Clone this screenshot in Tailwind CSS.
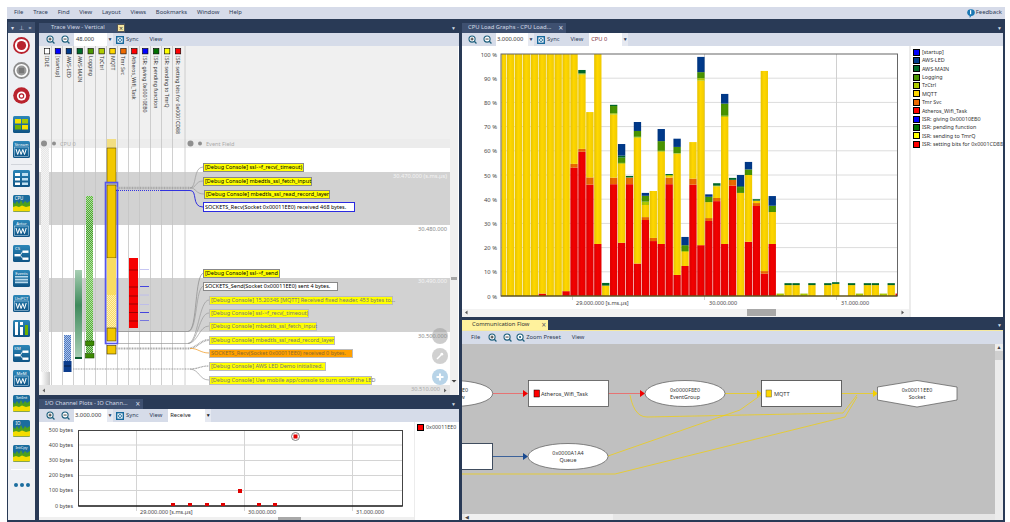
<!DOCTYPE html>
<html lang="en">
<head>
  <meta charset="UTF-8" />
  <title>Tracealyzer</title>
  <script src="https://cdn.jsdelivr.net/npm/@tailwindcss/browser@4"></script>
</head>
<body class="w-[1010px] h-[522px] overflow-hidden bg-white font-['Noto_Sans',sans-serif] text-[5.8px] text-[#2b3a55]">

  <!-- shared icons and fills -->
  <svg class="absolute w-0 h-0">
    <defs>
      <linearGradient id="iconBlue" x1="0" y1="0" x2="0" y2="1"><stop offset="0" stop-color="#2c86b8"/><stop offset="1" stop-color="#0f5384"/></linearGradient>
      <linearGradient id="barShade" x1="0" y1="0" x2="1" y2="0"><stop offset="0" stop-color="#000" stop-opacity=".1"/><stop offset=".45" stop-color="#000" stop-opacity="0"/><stop offset="1" stop-color="#000" stop-opacity=".06"/></linearGradient>
      <linearGradient id="greenFade" x1="0" y1="0" x2="0" y2="1"><stop offset="0" stop-color="#5cb83c"/><stop offset=".2" stop-color="#3f9f22"/><stop offset=".5" stop-color="#6cc04e"/><stop offset=".75" stop-color="#5cb83c"/><stop offset="1" stop-color="#3f9f22"/></linearGradient>
      <linearGradient id="dkFade" x1="0" y1="0" x2="0" y2="1"><stop offset="0" stop-color="#a8cfb4"/><stop offset=".4" stop-color="#3f8a5c"/><stop offset="1" stop-color="#a8cfb4"/></linearGradient>
      <linearGradient id="idleBar" x1="0" y1="0" x2="1" y2="0"><stop offset="0" stop-color="#fff"/><stop offset="1" stop-color="#c8c8c8"/></linearGradient>
      <pattern id="dither" width="2" height="2" patternUnits="userSpaceOnUse"><rect width="1" height="1" fill="#fff" fill-opacity=".55"/><rect x="1" y="1" width="1" height="1" fill="#fff" fill-opacity=".55"/></pattern>
      <symbol id="zoomIn" viewBox="0 0 10 10"><circle cx="4.5" cy="4.5" r="3.4" fill="#fff" stroke="#1d5f7c" stroke-width="1.2"/><path d="M7 7l2.4 2.4" stroke="#1d5f7c" stroke-width="1.4"/><path d="M2.8 4.5h3.4M4.5 2.8v3.4" stroke="#111" stroke-width=".9"/></symbol>
      <symbol id="zoomOut" viewBox="0 0 10 10"><circle cx="4.5" cy="4.5" r="3.4" fill="#fff" stroke="#1d5f7c" stroke-width="1.2"/><path d="M7 7l2.4 2.4" stroke="#1d5f7c" stroke-width="1.4"/><path d="M2.8 4.5h3.4" stroke="#111" stroke-width=".9"/></symbol>
      <symbol id="zoomFit" viewBox="0 0 10 10"><circle cx="4.5" cy="4.5" r="3.4" fill="#fff" stroke="#1d5f7c" stroke-width="1.2"/><path d="M7 7l2.4 2.4" stroke="#1d5f7c" stroke-width="1.4"/><circle cx="4.5" cy="4.5" r="1.2" fill="#1d5f7c"/></symbol>
      <symbol id="sync" viewBox="0 0 9 9"><rect width="9" height="9" fill="#17689c"/><rect x="1.6" y="1.6" width="5.8" height="5.8" fill="#fff"/><circle cx="4.5" cy="4.5" r="1.7" fill="none" stroke="#17689c"/></symbol>
      <symbol id="wave" viewBox="0 0 17 17"><rect width="17" height="17" rx="1.5" fill="url(#iconBlue)"/><rect x="1.5" y="6" width="14" height="9.5" fill="none" stroke="#cfe4f2" stroke-width=".5"/><path d="M3 8l1.7 5.5 1.7-5 1.7 5 1.7-5 1.700 5 1.700-5.500" fill="none" stroke="#fff" stroke-width="1"/></symbol>
      <symbol id="load" viewBox="0 0 17 17"><rect width="17" height="17" rx="1.5" fill="#1b6d9e"/><path d="M0 7l2 2 2-3 2 3 2-4 2 4 2-3 2 2 3-2v10H0z" fill="#4f9f1c"/><path d="M0 12l3-1 3 1 3-1.500 4 1.500 4-1v4.500a1 1 0 0 1-1 1H1a1 1 0 0 1-1-1z" fill="#f4dc00"/></symbol>
      <symbol id="tree" viewBox="0 0 17 17"><rect width="17" height="17" rx="1.5" fill="url(#iconBlue)"/><rect x="9.5" y="5.5" width="6" height="2.4" fill="#fff"/><rect x="1.5" y="9" width="6" height="2.4" fill="#fff"/><rect x="9.5" y="12.5" width="6" height="2.4" fill="#fff"/><path d="M7.5 10l2-3.300M7.500 10.400l2 3" stroke="#fff" stroke-width=".8"/></symbol>
    </defs>
  </svg>

  <div class="pt-[7px] pl-[7px] pr-[5px]">
    <!-- menu bar -->
    <div class="h-[12px] bg-[#d6dbe9] flex items-center pl-[7px] gap-[9.75px] leading-none text-[5.9px]">
      <span>File</span><span>Trace</span><span>Find</span><span>View</span><span>Layout</span><span>Views</span><span>Bookmarks</span><span>Window</span><span>Help</span>
      <span class="ml-auto mr-[3px] flex items-center gap-[1px]">
        <svg class="w-[8px] h-[9px]" viewBox="0 0 8 9"><ellipse cx="4" cy="3.6" rx="3.8" ry="3.4" fill="#1b78b4"/><path d="M2.5 6l.3 3 2.2-3z" fill="#1b78b4"/><rect x="3" y="1.2" width="1.2" height="4" fill="#fff"/></svg>
        Feedback
      </span>
    </div>

    <!-- main area -->
    <div class="h-[503px] bg-[#293a56] flex pl-[1px] pr-[2px] pt-[3px] pb-[2px]">

      <!-- left icon bar -->
      <div class="w-[27px] shrink-0 bg-[#eef0f4] flex flex-col">
        <div class="h-[11px] bg-[#3d4f6d] text-[#d5dbe6] flex items-center justify-around px-[1px] text-[6px] leading-none"><span>▾</span><span>⊥</span><span>×</span></div>
        <div class="h-[25px] flex items-center justify-center">
          <svg class="w-[17px] h-[17px]" viewBox="0 0 17 17"><circle cx="8.5" cy="8.5" r="7.5" fill="#fff" stroke="#b9232e" stroke-width="1.8"/><circle cx="8.5" cy="8.5" r="4.6" fill="#b9232e"/></svg>
        </div>
        <div class="h-[25px] flex items-center justify-center">
          <svg class="w-[17px] h-[17px]" viewBox="0 0 17 17"><circle cx="8.5" cy="8.5" r="7.5" fill="#fff" stroke="#8d8d8d" stroke-width="1.8"/><circle cx="8.5" cy="8.5" r="5" fill="#9a9a9a"/><rect x="5.8" y="5.8" width="5.4" height="5.4" fill="#777"/></svg>
        </div>
        <div class="h-[25px] flex items-center justify-center">
          <svg class="w-[17px] h-[17px]" viewBox="0 0 17 17"><circle cx="8.5" cy="8.5" r="8.3" fill="#b9232e"/><circle cx="8.5" cy="9" r="4.6" fill="#fff"/><circle cx="8.5" cy="9" r="2.8" fill="#b9232e"/><circle cx="8.5" cy="9" r="1.6" fill="#fff"/></svg>
        </div>
        <div class="h-[25px] mt-[4px] flex items-center justify-center">
          <svg class="w-[17px] h-[17px]" viewBox="0 0 17 17"><rect width="17" height="17" rx="1.5" fill="url(#iconBlue)"/><rect x="2" y="3" width="6" height="4.5" fill="#f3e100"/><rect x="9" y="3" width="6" height="4.5" fill="#a8c800"/><rect x="2" y="9" width="6" height="4.5" fill="#6fb000"/><rect x="9" y="9" width="6" height="4.5" fill="#f3e100"/></svg>
        </div>
        <div class="h-[25px] flex items-center justify-center">
          <svg class="w-[17px] h-[17px]" viewBox="0 0 17 17"><use href="#wave"/><text x="8.5" y="4.8" font-size="4.2" fill="#fff" text-anchor="middle">Stream</text></svg>
        </div>
        <div class="h-px bg-[#d2d5db] my-[1.5px] mx-[3px]"></div>
        <div class="h-[25px] flex items-center justify-center">
          <svg class="w-[17px] h-[17px]" viewBox="0 0 17 17"><rect width="17" height="17" rx="1.5" fill="url(#iconBlue)"/><path d="M2 3h5v3H2zM2 8h5v2.500H2zM2 12.500h5V15H2z" fill="#fff"/><path d="M9 3h6v3H9zM9 8h6v2.500H9zM9 12.500h6V15H9z" fill="#bfe0f2"/></svg>
        </div>
        <div class="h-[25px] flex items-center justify-center">
          <svg class="w-[17px] h-[17px]" viewBox="0 0 17 17"><use href="#load"/><text x="6" y="4.5" font-size="4.4" fill="#fff" text-anchor="middle">CPU</text></svg>
        </div>
        <div class="h-[25px] flex items-center justify-center">
          <svg class="w-[17px] h-[17px]" viewBox="0 0 17 17"><use href="#wave"/><text x="8.5" y="4.8" font-size="4.2" fill="#fff" text-anchor="middle">Actor</text></svg>
        </div>
        <div class="h-[25px] flex items-center justify-center">
          <svg class="w-[17px] h-[17px]" viewBox="0 0 17 17"><use href="#tree"/><text x="4.5" y="4.8" font-size="4.2" fill="#fff" text-anchor="middle">CS</text></svg>
        </div>
        <div class="h-[25px] flex items-center justify-center">
          <svg class="w-[17px] h-[17px]" viewBox="0 0 17 17"><rect width="17" height="17" rx="1.5" fill="url(#iconBlue)"/><path d="M2 6h13v1.600H2zM2 8.800h13v1.600H2zM2 11.600h13v1.600H2z" fill="#b9d9ec"/><text x="8.5" y="4.6" font-size="4" fill="#fff" text-anchor="middle">Events</text></svg>
        </div>
        <div class="h-[25px] flex items-center justify-center">
          <svg class="w-[17px] h-[17px]" viewBox="0 0 17 17"><use href="#wave"/><text x="8.5" y="4.8" font-size="4" fill="#fff" text-anchor="middle">UniPCT</text></svg>
        </div>
        <div class="h-[25px] flex items-center justify-center">
          <svg class="w-[17px] h-[17px]" viewBox="0 0 17 17"><rect width="17" height="17" rx="1.5" fill="url(#iconBlue)"/><path d="M2 2h3v13H2zM7 2h3v3H7zM7 7h3v8H7z" fill="#fff"/><path d="M12 5h3v10h-3z" fill="#6db100"/></svg>
        </div>
        <div class="h-[25px] flex items-center justify-center">
          <svg class="w-[17px] h-[17px]" viewBox="0 0 17 17"><use href="#tree"/><text x="4.5" y="4.8" font-size="4.2" fill="#fff" text-anchor="middle">KM</text></svg>
        </div>
        <div class="h-[25px] flex items-center justify-center">
          <svg class="w-[17px] h-[17px]" viewBox="0 0 17 17"><use href="#wave"/><text x="8.5" y="4.8" font-size="4.2" fill="#fff" text-anchor="middle">MeM</text></svg>
        </div>
        <div class="h-[25px] flex items-center justify-center">
          <svg class="w-[17px] h-[17px]" viewBox="0 0 17 17"><use href="#load"/><text x="8.5" y="4.4" font-size="4" fill="#fff" text-anchor="middle">SetInt</text></svg>
        </div>
        <div class="h-[25px] flex items-center justify-center">
          <svg class="w-[17px] h-[17px]" viewBox="0 0 17 17"><use href="#load"/><text x="5" y="4.5" font-size="4.4" fill="#fff" text-anchor="middle">IO</text></svg>
        </div>
        <div class="h-[25px] flex items-center justify-center">
          <svg class="w-[17px] h-[17px]" viewBox="0 0 17 17"><use href="#load"/><text x="8.5" y="4.4" font-size="4" fill="#fff" text-anchor="middle">IntCpy</text></svg>
        </div>
        <div class="h-px bg-[#fff] mt-[3px] mb-[2px] mx-[3px]"></div>
        <div class="h-[25px] flex items-center justify-center gap-[2px]">
          <div class="w-[4px] h-[4px] rounded-full bg-[#1b6d9e]"></div>
          <div class="w-[4px] h-[4px] rounded-full bg-[#1b6d9e]"></div>
          <div class="w-[4px] h-[4px] rounded-full bg-[#1b6d9e]"></div>
        </div>
      </div>

      <!-- left column -->
      <div class="w-[420px] shrink-0 ml-[4px] flex flex-col">

        <!-- trace view -->
        <div class="h-[373px] flex flex-col">
          <div class="h-[11px] flex items-end">
            <div class="w-[86px] h-[10px] bg-[#3e5070] text-[#d5dbe6] flex items-center justify-between pl-[12px] leading-none whitespace-nowrap">
              <span>Trace View - Vertical</span>
              <span class="w-[8px] h-[8px] bg-[#f7e7a0] border border-[#555] text-[#333] flex items-center justify-center text-[7px] leading-none">×</span>
            </div>
            <div class="ml-auto mr-[3px] text-[#d5dbe6] text-[5px] leading-none mb-[2px]">▼</div>
          </div>
          <div class="h-[13px] bg-[#d6dce9] flex items-center leading-none">
            <svg class="w-[9px] h-[9px] ml-[7px]"><use href="#zoomIn"/></svg>
            <svg class="w-[9px] h-[9px] ml-[6px]"><use href="#zoomOut"/></svg>
            <div class="w-[33px] h-[13px] ml-[4px] bg-white flex items-center pl-[2px] text-[#333]">48.000</div>
            <div class="w-[6px] h-[13px] bg-[#e6e9f1] text-[5px] flex items-center justify-center">▼</div>
            <svg class="w-[8px] h-[8px] ml-[3px]"><use href="#sync"/></svg>
            <span class="ml-[2px]">Sync</span>
            <span class="ml-[11px]">View</span>
          </div>
          <div class="relative h-[349px] bg-white overflow-hidden">
            <svg id="traceSvg" class="absolute left-0 top-0 w-[419px] h-[349px]" viewBox="39 46 419 349">
              <rect x="39" y="46" width="419" height="93" fill="#f0f0f0"/>
              <rect x="39" y="172" width="411" height="53" fill="#d2d2d2"/>
              <rect x="39" y="278" width="411" height="54" fill="#d2d2d2"/>
              <rect x="39" y="139" width="411" height="9" fill="#ececec"/>
              <g id="columns"></g>
              <g font-size="5.2" fill="#333" id="colLabels"></g>

              <!-- idle column -->
              <rect x="41" y="148" width="8" height="224" fill="#e6e6e6"/>
              <rect x="41" y="148" width="8" height="224" fill="url(#dither)"/>
              <rect x="41" y="372" width="9" height="13" fill="url(#idleBar)"/>

              <!-- AWS-LED -->
              <rect x="64" y="335" width="7" height="30" fill="#4a78c4"/>
              <rect x="64" y="335" width="7" height="30" fill="url(#dither)"/>
              <rect x="63.5" y="361" width="8" height="11" fill="#0b3c8c"/>
              <path d="M64 366h7" stroke="#000" stroke-width=".5"/>
              <!-- AWS-MAIN -->
              <rect x="75" y="270" width="7" height="88" fill="url(#dkFade)"/>
              <rect x="75" y="357" width="7" height="2" fill="#0b5a30"/>
              <!-- Logging -->
              <rect x="86" y="196" width="7" height="157" fill="url(#greenFade)"/>
              <rect x="86" y="196" width="7" height="157" fill="url(#dither)"/>
              <rect x="85.5" y="341" width="8.5" height="4.5" fill="#3c8a00" stroke="#1b4a00" stroke-width=".6"/>
              <rect x="85.5" y="353.5" width="8.5" height="4.5" fill="#3c8a00" stroke="#1b4a00" stroke-width=".6"/>
              <!-- MQTT -->
              <rect x="107" y="139" width="9" height="9" fill="#f2de83"/>
              <rect x="107" y="148" width="9" height="35" fill="#f2c800" stroke="#3d3000" stroke-width=".5"/>
              <rect x="107" y="185" width="9" height="73" fill="#f2c800" stroke="#3d3000" stroke-width=".6"/>
              <rect x="107" y="258" width="9" height="70" fill="#f8dc62"/>
              <rect x="107" y="295" width="9" height="33" fill="url(#dither)"/>
              <rect x="107" y="328" width="9" height="13" fill="#f2c800" stroke="#3d3000" stroke-width=".6"/>
              <rect x="105.5" y="182.5" width="12" height="161" fill="none" stroke="#5555ee" stroke-width="1.6"/>
              <rect x="107" y="345.5" width="9" height="8.5" fill="#f2c800" stroke="#3d3000" stroke-width=".6"/>
              <!-- Atheros_Wifi_Task -->
              <rect x="129" y="258" width="9" height="70" fill="#f50000"/>
              <path d="M129 270h9M129 287h9M129 296h9M129 304h9M129 312.500h9M129 321h9" stroke="#700" stroke-width=".7"/>
              <!-- ISR ticks -->
              <path d="M140 269.500h9M140 295h9M140 304.500h9" stroke="#b8b8f0" stroke-width=".8"/>
              <path d="M140 286.500h9M140 312.500h9" stroke="#2020e0" stroke-width=".8"/>
              <path d="M140 320.500h9" stroke="#6060e0" stroke-width=".8"/>

              <!-- connectors -->
              <g fill="none" stroke="#9a9a9a" stroke-width=".7">
                <path d="M116 188h74" stroke-width="2.4" stroke-dasharray="1 .6" stroke="#a8a8a8"/>
                <path d="M190 188C197 188 193 167 203 167"/>
                <path d="M190 188C197 188 195 181 203 181"/>
                <path d="M190 188C197 188 195 194 204 194"/>
                <path d="M118 331.500H188C198 331 194 273 204 273" stroke="#888"/>
                <path d="M188 331.500C198 331 195 286 204 286"/>
                <path d="M118 343.500H188C198 343 199 300 209 300"/>
                <path d="M188 343.500C198 343 199 313 209 313"/>
                <path d="M188 343.500C198 343 199 326 209 326"/>
                <path d="M116 348.500H188C198 348 200 340 209 340" stroke-width="2" stroke-dasharray="1 .6" stroke="#a8a8a8"/>
                <path d="M73 369H190C198 369 200 366 209 366" stroke-dasharray="1 .6" stroke-width="1.2"/>
                <path d="M190 369C200 370 199 380 209 380"/>
              </g>
              <path d="M190 348.500C198 348 200 353 209 353" fill="none" stroke="#f0a030" stroke-width=".8"/>
              <path d="M116 190.500H160" fill="none" stroke="#2020e0" stroke-width=".9" stroke-dasharray="1 1"/>
              <path d="M160 190.500H190C198 190 191 207 203 207" fill="none" stroke="#2020e0" stroke-width=".9"/>

              <!-- column header row -->
              <g fill="#8f8f8f">
                <circle cx="44" cy="143.5" r="3"/><circle cx="54" cy="143.5" r="2"/>
                <circle cx="190.5" cy="143.5" r="3"/><circle cx="200" cy="143.5" r="2"/>
              </g>
              <text x="60" y="145.5" font-size="5.6" fill="#aaa">CPU 0</text>
              <text x="206" y="145.5" font-size="5.6" fill="#aaa">Event Field</text>

              <!-- time stamps -->
              <g font-size="5.7" text-anchor="end">
                <text x="447" y="178" fill="#f4f4f4">30.470.000 (s.ms.µs)</text>
                <text x="447" y="231" fill="#888">30.480.000</text>
                <text x="447" y="283" fill="#f4f4f4">30.490.000</text>
                <text x="447" y="338" fill="#888">30.500.000</text>
              </g>

              <!-- scrollbars -->
              <rect x="39" y="385" width="411" height="10" fill="#e4e4e4"/>
              <path d="M45 388.500l-2.500 2 2.500 2z" fill="#666"/>
              <text x="440" y="391" font-size="5.7" fill="#aaa" text-anchor="end">30.510.000</text>
              <rect x="450" y="46" width="8" height="349" fill="#f0f0f0"/>
              <rect x="451" y="277" width="6" height="3" fill="#a6a6a6"/>
              <path d="M451.500 380h5l-2.500 2.500z" fill="#444"/>
              <path d="M444 388.500l2.500 2-2.500 2z" fill="#666"/>
            </svg>

            <!-- event labels -->
            <div class="absolute left-[164px] top-[117px] w-[101px] h-[9px] bg-[#ffff00] border border-[#888] text-black text-[5.5px] leading-[7px] whitespace-nowrap pl-[1px]">[Debug Console] ssl->f_recv(_timeout)</div>
            <div class="absolute left-[164px] top-[131px] w-[109px] h-[9px] bg-[#ffff00] border border-[#888] text-black text-[5.5px] leading-[7px] whitespace-nowrap pl-[1px]">[Debug Console] mbedtls_ssl_fetch_input</div>
            <div class="absolute left-[165px] top-[144px] w-[126px] h-[9px] bg-[#ffff00] border border-[#888] text-black text-[5.5px] leading-[7px] whitespace-nowrap pl-[1px]">[Debug Console] mbedtls_ssl_read_record_layer</div>
            <div class="absolute left-[164px] top-[156px] w-[152px] h-[10px] bg-white border border-[#2a2ae0] text-black text-[5.5px] leading-[8px] whitespace-nowrap pl-[1px]">SOCKETS_Recv(Socket 0x00011EE0) received 468 bytes.</div>
            <div class="absolute left-[164px] top-[223px] w-[77px] h-[9px] bg-[#ffff00] border border-[#888] text-black text-[5.5px] leading-[7px] whitespace-nowrap pl-[1px]">[Debug Console] ssl->f_send</div>
            <div class="absolute left-[164px] top-[236px] w-[135px] h-[9px] bg-white border border-[#888] text-black text-[5.5px] leading-[7px] whitespace-nowrap pl-[1px]">SOCKETS_Send(Socket 0x00011EE0) sent 4 bytes.</div>
            <div class="absolute left-[170px] top-[250px] w-[184px] h-[9px] bg-[#ffff00] border border-[#bbb] text-[#777] text-[5.5px] leading-[7px] whitespace-nowrap pl-[1px]">[Debug Console] 15.2034S [MQTT] Received fixed header, 453 bytes to...</div>
            <div class="absolute left-[170px] top-[263px] w-[100px] h-[9px] bg-[#ffff00] border border-[#bbb] text-[#777] text-[5.5px] leading-[7px] whitespace-nowrap pl-[1px]">[Debug Console] ssl->f_recv(_timeout)</div>
            <div class="absolute left-[170px] top-[276px] w-[108px] h-[9px] bg-[#ffff00] border border-[#bbb] text-[#777] text-[5.5px] leading-[7px] whitespace-nowrap pl-[1px]">[Debug Console] mbedtls_ssl_fetch_input</div>
            <div class="absolute left-[170px] top-[290px] w-[126px] h-[9px] bg-[#ffff00] border border-[#bbb] text-[#777] text-[5.5px] leading-[7px] whitespace-nowrap pl-[1px]">[Debug Console] mbedtls_ssl_read_record_layer</div>
            <div class="absolute left-[170px] top-[303px] w-[144px] h-[9px] bg-[#ffa000] border border-[#bbb] text-[#8a6a30] text-[5.5px] leading-[7px] whitespace-nowrap pl-[1px]">SOCKETS_Recv(Socket 0x00011EE0) received 0 bytes.</div>
            <div class="absolute left-[170px] top-[316px] w-[117px] h-[9px] bg-[#ffff00] border border-[#bbb] text-[#777] text-[5.5px] leading-[7px] whitespace-nowrap pl-[1px]">[Debug Console] AWS LED Demo initialized.</div>
            <div class="absolute left-[170px] top-[330px] w-[163px] h-[9px] bg-[#ffff00] border border-[#bbb] text-[#777] text-[5.5px] leading-[7px] whitespace-nowrap pl-[1px]">[Debug Console] Use mobile app/console to turn on/off the LED</div>

            <!-- floating buttons -->
            <div class="absolute left-[393px] top-[282px] w-[16px] h-[16px] rounded-full bg-[#9a9a9a]/50"></div>
            <div class="absolute left-[393px] top-[302px] w-[16px] h-[16px] rounded-full bg-[#b0b0b0]/60 flex items-center justify-center">
              <svg class="w-[8px] h-[8px]" viewBox="0 0 8 8"><path d="M1 7l4-4" stroke="#fff" stroke-width="1.4"/><circle cx="5.8" cy="2.2" r="1.4" fill="#fff"/></svg>
            </div>
            <div class="absolute left-[393px] top-[323px] w-[16px] h-[16px] rounded-full bg-[#b8d4e8] flex items-center justify-center">
              <svg class="w-[8px] h-[8px]" viewBox="0 0 8 8"><path d="M4 .5v7M.5 4h7" stroke="#fff" stroke-width="2"/></svg>
            </div>
          </div>
        </div>

        <div class="h-[4px] shrink-0"></div>

        <!-- I/O channel plots -->
        <div class="h-[121px] flex flex-col">
          <div class="h-[10px] flex items-end">
            <div class="w-[104px] h-[10px] bg-[#3e5070] text-[#d5dbe6] flex items-center justify-between pl-[6px] pr-[3px] leading-none whitespace-nowrap">
              <span>I/O Channel Plots - IO Chann...</span><span class="text-[8px]">×</span>
            </div>
            <div class="ml-auto mr-[3px] text-[#d5dbe6] text-[5px] leading-none mb-[2px]">▼</div>
          </div>
          <div class="h-[13px] bg-[#d6dce9] flex items-center leading-none">
            <svg class="w-[9px] h-[9px] ml-[7px]"><use href="#zoomIn"/></svg>
            <svg class="w-[9px] h-[9px] ml-[6px]"><use href="#zoomOut"/></svg>
            <div class="w-[33px] h-[13px] ml-[4px] bg-white flex items-center pl-[1px] text-[#333]">3.000.000</div>
            <div class="w-[6px] h-[13px] bg-[#e6e9f1] text-[5px] flex items-center justify-center">▼</div>
            <svg class="w-[8px] h-[8px] ml-[3px]"><use href="#sync"/></svg>
            <span class="ml-[2px]">Sync</span>
            <span class="ml-[11px]">View</span>
            <div class="w-[43px] h-[13px] ml-[6px] bg-white flex items-center justify-between pl-[2px] text-[#222]">Receive<span class="w-[6px] h-[13px] bg-[#e6e9f1] text-[5px] flex items-center justify-center">▼</span></div>
          </div>
          <div class="flex-1 bg-white flex overflow-hidden">
            <svg class="w-[375px] h-[98px] shrink-0" viewBox="39 422 375 98">
              <g stroke="#d4d4d4" stroke-width="1" fill="none">
                <path d="M78 445h324M78 460.500h324M78 475.500h324M78 490.500h324"/>
                <path d="M136.500 430v81M244.500 430v81M352.500 430v81"/>
              </g>
              <rect x="78.5" y="430.5" width="324" height="75.5" fill="none" stroke="#444"/>
              <path d="M78.500 506h324" stroke="#000" stroke-width="1.2"/>
              <g font-size="5.4" fill="#444" text-anchor="end">
                <text x="73" y="432">500 bytes</text>
                <text x="73" y="447">400 bytes</text>
                <text x="73" y="462">300 bytes</text>
                <text x="73" y="477">200 bytes</text>
                <text x="73" y="492">100 bytes</text>
                <text x="73" y="508">0 bytes</text>
              </g>
              <g font-size="5.5" fill="#444">
                <text x="140" y="514">29.000.000 [s.ms.µs]</text>
                <text x="248" y="514">30.000.000</text>
                <text x="356" y="514">31.000.000</text>
              </g>
              <g fill="#e00000">
                <rect x="171" y="503" width="4" height="3"/><rect x="188" y="503" width="4" height="3"/>
                <rect x="205" y="503" width="4" height="3"/><rect x="221" y="503" width="4" height="3"/>
                <rect x="238" y="489" width="4" height="4"/><rect x="257" y="503" width="4" height="3"/>
                <rect x="273" y="503" width="4" height="3"/><rect x="293.5" y="434.5" width="4" height="4"/>
              </g>
              <circle cx="295.5" cy="436.5" r="4" fill="none" stroke="#666" stroke-width=".8"/>
              <rect x="39" y="517" width="375" height="3" fill="#f0f0f0"/>
              <rect x="278" y="517" width="23" height="3" fill="#a8a8a8"/>
            </svg>
            <div class="w-px bg-[#ececec]"></div>
            <div class="flex-1 flex items-start pl-[2px] pt-[2px] gap-[2px] text-[#444] text-[5.4px] whitespace-nowrap leading-[7px]">
              <span class="w-[7px] h-[7px] shrink-0 bg-[#f00] border border-black"></span>0x00011EE0
            </div>
          </div>
        </div>
      </div>

      <!-- right column -->
      <div class="w-[541px] shrink-0 ml-[3px] flex flex-col">

        <!-- CPU load graphs -->
        <div class="h-[295px] flex flex-col">
          <div class="h-[11px] flex items-end">
            <div class="w-[104px] h-[10px] bg-[#3e5070] text-[#d5dbe6] flex items-center justify-between pl-[6px] pr-[3px] leading-none whitespace-nowrap">
              <span>CPU Load Graphs - CPU Load...</span><span class="text-[8px]">×</span>
            </div>
            <div class="ml-auto mr-[1px] text-[#d5dbe6] text-[5px] leading-none mb-[2px]">▼</div>
          </div>
          <div class="h-[13px] bg-[#d6dce9] flex items-center leading-none">
            <svg class="w-[9px] h-[9px] ml-[6px]"><use href="#zoomIn"/></svg>
            <svg class="w-[9px] h-[9px] ml-[6px]"><use href="#zoomOut"/></svg>
            <div class="w-[32px] h-[13px] ml-[4px] bg-white flex items-center pl-[1px] text-[#333]">3.000.000</div>
            <div class="w-[6px] h-[13px] bg-[#e6e9f1] text-[5px] flex items-center justify-center">▼</div>
            <svg class="w-[8px] h-[8px] ml-[3px]"><use href="#sync"/></svg>
            <span class="ml-[2px]">Sync</span>
            <span class="ml-[11px]">View</span>
            <div class="w-[39px] h-[13px] ml-[6px] bg-white flex items-center justify-between pl-[2px] text-[#80303a]">CPU 0<span class="w-[6px] h-[13px] bg-[#e6e9f1] text-[#2b3a55] text-[5px] flex items-center justify-center">▼</span></div>
          </div>
          <div class="flex-1 bg-white flex overflow-hidden">
            <svg id="cpuSvg" class="w-[447px] h-[271px] shrink-0" viewBox="462 46 447 271"></svg>
            <div class="w-[2px] bg-[#ececec]"></div>
            <div class="flex-1 pl-[2px] pt-[2px] flex flex-col text-[#333] text-[5.4px] whitespace-nowrap leading-[8.36px]">
              <div class="flex items-center gap-[2px]"><span class="w-[7px] h-[7px] bg-[#0000ff] border border-black"></span>[startup]</div>
              <div class="flex items-center gap-[2px]"><span class="w-[7px] h-[7px] bg-[#003a8c] border border-black"></span>AWS-LED</div>
              <div class="flex items-center gap-[2px]"><span class="w-[7px] h-[7px] bg-[#006a2a] border border-black"></span>AWS-MAIN</div>
              <div class="flex items-center gap-[2px]"><span class="w-[7px] h-[7px] bg-[#4a9600] border border-black"></span>Logging</div>
              <div class="flex items-center gap-[2px]"><span class="w-[7px] h-[7px] bg-[#b0cc00] border border-black"></span>TzCtrl</div>
              <div class="flex items-center gap-[2px]"><span class="w-[7px] h-[7px] bg-[#ffd700] border border-black"></span>MQTT</div>
              <div class="flex items-center gap-[2px]"><span class="w-[7px] h-[7px] bg-[#ee6a00] border border-black"></span>Tmr Svc</div>
              <div class="flex items-center gap-[2px]"><span class="w-[7px] h-[7px] bg-[#f00] border border-black"></span>Atheros_Wifi_Task</div>
              <div class="flex items-center gap-[2px]"><span class="w-[7px] h-[7px] bg-[#0000ff] border border-black"></span>ISR: giving 0x00010EB0</div>
              <div class="flex items-center gap-[2px]"><span class="w-[7px] h-[7px] bg-[#007000] border border-black"></span>ISR: pending function</div>
              <div class="flex items-center gap-[2px]"><span class="w-[7px] h-[7px] bg-[#ffff00] border border-black"></span>ISR: sending to TmrQ</div>
              <div class="flex items-center gap-[2px]"><span class="w-[7px] h-[7px] bg-[#f00] border border-black"></span>ISR: setting bits for 0x0001CD88</div>
            </div>
          </div>
        </div>

        <div class="h-[3px] shrink-0"></div>

        <!-- communication flow -->
        <div class="flex-1 flex flex-col overflow-hidden">
          <div class="h-[11px] flex items-end border-b border-[#f5e9a0]">
            <div class="w-[86px] h-[10px] bg-[#fff29d] text-[#333] flex items-center justify-between pl-[10px] pr-[2px] leading-none whitespace-nowrap">
              <span>Communication Flow</span><span class="text-[8px] text-[#666]">×</span>
            </div>
            <div class="ml-auto mr-[1px] text-[#d5dbe6] text-[5px] leading-none mb-[2px]">▼</div>
          </div>
          <div class="h-[13px] bg-[#d6dce9] flex items-center leading-none shrink-0">
            <span class="ml-[9px]">File</span>
            <svg class="w-[9px] h-[9px] ml-[8px]"><use href="#zoomIn"/></svg>
            <svg class="w-[9px] h-[9px] ml-[6px]"><use href="#zoomOut"/></svg>
            <svg class="w-[9px] h-[9px] ml-[4px]"><use href="#zoomFit"/></svg>
            <span class="ml-[1px]">Zoom Preset</span>
            <span class="ml-[11px]">View</span>
          </div>
          <div class="flex-1 flex bg-[#c0c0c0] overflow-hidden">
            <div class="flex-1 flex flex-col">
              <svg class="w-[533px] h-[170px] shrink-0" viewBox="462 344 533 170">
                <g fill="none" stroke="#f4d000" stroke-width=".7">
                  <path d="M608 456L740 410 761 395"/>
                  <path d="M462 474H615L740 443 845 417 857 397"/>
                  <path d="M630 395C632 405 636 417 647 417L843 413 857 395"/>
                  <path d="M725 393.500H757M841 393.500H873"/>
                </g>
                <path d="M492 393.500H524M608 393.500H640" stroke="#f06060" stroke-width=".8"/>
                <path d="M492 456.500H524" stroke="#1a4a90" stroke-width=".8"/>
                <path d="M523 390l5 3.500-5 3.500zM640 390l5 3.500-5 3.500z" fill="#f00000"/>
                <path d="M523 453l5 3.500-5 3.500z" fill="#1a4a90"/>
                <path d="M757 390l5 3.500-5 3.500zM873 390l5 3.500-5 3.500z" fill="#f4d000"/>

                <ellipse cx="452.7" cy="393.5" rx="40" ry="13" fill="#fff" stroke="#555" stroke-width=".7"/>
                <ellipse cx="685" cy="393.5" rx="40" ry="13" fill="#fff" stroke="#555" stroke-width=".7"/>
                <ellipse cx="568" cy="456.5" rx="40" ry="13" fill="#fff" stroke="#555" stroke-width=".7"/>
                <rect x="528.5" y="380.5" width="80" height="26" fill="#fff" stroke="#555" stroke-width=".8"/>
                <rect x="761.5" y="380.5" width="80" height="26" fill="#fff" stroke="#444" stroke-width=".8"/>
                <rect x="450" y="443.5" width="42.5" height="26" fill="#fff" stroke="#1a2a40" stroke-width=".8"/>
                <path d="M877.500 387L917 380.500 957 387V400L917 407 877.500 400z" fill="#fff" stroke="#555" stroke-width=".7"/>
                <rect x="534" y="390" width="5.5" height="7" fill="#f00" stroke="#000" stroke-width=".5"/>
                <rect x="766" y="390" width="5.5" height="7" fill="#ffd700" stroke="#555" stroke-width=".5"/>

                <g font-size="5.6" fill="#333">
                  <text x="541" y="395.5">Atheros_Wifi_Task</text>
                  <text x="774" y="395.5">MQTT</text>
                </g>
                <g font-size="5.4" fill="#333" text-anchor="middle">
                  <text x="685" y="391.5">0x0000F8E0</text><text x="685" y="399">EventGroup</text>
                  <text x="568" y="454.5">0x0000A1A4</text><text x="568" y="462">Queue</text>
                  <text x="917" y="391.5">0x00011EE0</text><text x="917" y="399">Socket</text>
                  <text x="452.7" y="391.5">0x0000A0E0</text><text x="452.7" y="399">Workflow</text>
                </g>
              </svg>
              <div class="flex-1 bg-[#e6e6e6] flex items-center">
                <div class="h-full w-[148px] ml-[3px] bg-[#f0f0f0] flex items-center text-[5px] leading-none text-[#444]">◀</div>
              </div>
            </div>
            <div class="w-[8px] bg-[#ececec] flex flex-col items-center pt-[1px] text-[5px] leading-none text-[#444]">
              <span>▲</span>
              <div class="w-full h-[9px] mt-[1px] bg-[#cfcfcf]"></div>
            </div>
          </div>
        </div>
      </div>
    </div>
  </div>

  <script>
    // trace view column headers
    var cols = [
      ["#fff", "IDLE"], ["#0000ff", "[startup]"], ["#003a8c", "AWS-LED"], ["#006a2a", "AWS-MAIN"],
      ["#4a9600", "Logging"], ["#b0cc00", "TzCtrl"], ["#ffd700", "MQTT"], ["#ee6a00", "Tmr Svc"],
      ["#f00", "Atheros_Wifi_Task"], ["#0000ff", "ISR: giving 0x00010EB0"], ["#007000", "ISR: pending function"],
      ["#ffff00", "ISR: sending to TmrQ"], ["#f00", "ISR: setting bits for 0x0001CD88"]
    ];
    var lineX = [51.5, 62.5, 73.5, 84.5, 95.5, 106.5, 117.5, 128.5, 139.5, 150.5, 161.5, 172.5, 185];
    var cs = "", ls = "";
    lineX.forEach(function (x) { cs += '<path d="M' + x + ' 46V385" stroke="#c4c4c4" stroke-width=".8"/>'; });
    cols.forEach(function (c, i) {
      var x = 47 + i * 10.92;
      ls += '<rect x="' + (x - 2.7) + '" y="48.5" width="5.4" height="5.4" fill="' + c[0] + '" stroke="#000" stroke-width=".6"/>';
      ls += '<text transform="translate(' + (x - 2) + ',56) rotate(90)">' + c[1] + '</text>';
    });
    document.getElementById("columns").innerHTML = cs;
    document.getElementById("colLabels").innerHTML = ls;

    // cpu load chart: each bar holds the cumulative top of every stacked task
    var colors = { r: "#f20000", o: "#ee6a00", y: "#ffd700", l: "#b0cc00", g: "#4a9600", d: "#006a2a", b: "#003a8c" };
    var order = ["r", "o", "y", "l", "g", "d", "b"];
    var small = { y: 4.5, d: 5.3 }, tiny = { l: 1 };
    var bars = [
      { y: 100 }, { y: 100 }, { y: 100 }, { y: 100 }, { y: 100 }, { r: 1, y: 100 }, { y: 100 }, { y: 100 },
      { r: 2, y: 100 }, { r: 53, o: 54.6, y: 100 }, { r: 59.6, o: 60.8, y: 91.5, l: 92, d: 93.4 },
      { r: 46, o: 49, y: 76 }, { r: 21.5, y: 100 }, { y: 4.3, d: 5.4 },
      { r: 46.2, o: 48.9, y: 75, l: 75.5, g: 78.5, d: 79 },
      { r: 22, y: 54.6, l: 55, g: 57.2, d: 58, b: 62.8 },
      { r: 46.2, o: 48.9, y: 49, d: 49.6 },
      { r: 13.4, y: 65.4, l: 65.8, g: 68.2, b: 71.9 },
      { r: 31.4, o: 32.6, y: 37.6, l: 39, g: 41.4, b: 42.6 },
      { r: 22.7, o: 24, y: 43.4 },
      { r: 21.5, y: 59.6, l: 60, g: 64, b: 69 },
      { r: 46.2, o: 48.9, y: 49.6, l: 50, d: 50.4 },
      { r: 8.7, y: 58.8, l: 59, g: 61.6, b: 65 },
      { r: 12.4, y: 18.2, l: 18.6, g: 21, b: 24.4 },
      { r: 46, o: 48.5, y: 63.6 },
      { r: 21, y: 89, l: 90, g: 92.5, b: 98.8 },
      { r: 31, o: 32.2, y: 38.8, g: 41, b: 42 },
      { r: 39.2, o: 40.5, y: 45.3, l: 45.6, d: 46.6 },
      { r: 21.5, y: 74, l: 74.5, g: 79.5, b: 83.5 },
      { r: 45.6, o: 48, d: 48.8 },
      { y: 42.6, g: 45, d: 45.4, b: 50 },
      { r: 22.4, y: 50, g: 52.3, b: 55.4 },
      { r: 37.2, o: 38.4, y: 39.4, d: 40 },
      { r: 9.2, o: 10.3, y: 93 },
      { r: 21.5, y: 34.7, g: 37.3, b: 41.3 },
      tiny, small, small, tiny, small, {}, small, { y: 5, d: 5.7 }, {}, small, tiny, small, small, tiny, small, { r: 1 }
    ];
    var X0 = 499, STEP = 7.93, BASE = 296, PX = 2.42;
    var s = "";
    for (var p = 0; p <= 10; p++) {
      var gy = BASE - p * 10 * PX;
      if (p > 0 && p < 10) s += '<path d="M501 ' + gy + 'H897" stroke="#dcdcdc" stroke-width="1"/>';
      s += '<text x="497" y="' + (gy + 2.5) + '" font-size="5.8" fill="#444" text-anchor="end">' + (p * 10) + ' %</text>';
    }
    [572.5, 704.5, 836.5].forEach(function (x) { s += '<path d="M' + x + ' 54V300" stroke="#d0d0d0" stroke-width="1"/>'; });
    bars.forEach(function (b, i) {
      var left = Math.max(X0 + i * STEP, 501.5), w = X0 + i * STEP + 7.3 - left;
      if (left + w > 897) w = 897 - left;
      var prev = 0;
      order.forEach(function (k) {
        if (b[k] === undefined) return;
        var top = BASE - b[k] * PX, h = (b[k] - prev) * PX;
        s += '<rect x="' + left + '" y="' + top + '" width="' + w + '" height="' + h + '" fill="' + colors[k] + '"/>';
        prev = b[k];
      });
      if (prev > 0) s += '<rect x="' + left + '" y="' + (BASE - prev * PX) + '" width="' + w + '" height="' + prev * PX + '" fill="url(#barShade)"/>';
    });
    s += '<rect x="501" y="54" width="396.5" height="242" fill="none" stroke="#666" stroke-width="1"/>';
    s += '<path d="M501 296H897" stroke="#5a4a00" stroke-width="1"/>';
    s += '<g font-size="5.5" fill="#444"><text x="576" y="304.5">29.000.000 [s.ms.µs]</text><text x="709" y="304.5">30.000.000</text><text x="841" y="304.5">31.000.000</text></g>';
    s += '<rect x="462" y="309" width="447" height="8" fill="#f2f2f2"/>';
    s += '<rect x="747" y="309" width="29" height="7" fill="#a8a8a8"/>';
    s += '<path d="M467.500 310.500l-2.500 2 2.500 2zM901.500 310.500l2.500 2-2.500 2z" fill="#555"/>';
    document.getElementById("cpuSvg").innerHTML = s;
  </script>
</body>
</html>
